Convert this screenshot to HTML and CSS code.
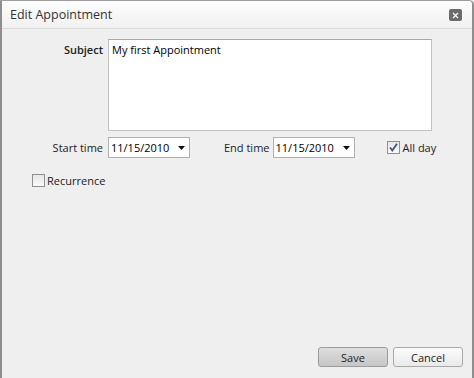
FILE: index.html
```html
<!DOCTYPE html>
<html>
<head>
<meta charset="utf-8">
<link rel="stylesheet" href="styles.css">
</head>
<body>
<div class="window">
  <div class="titlebar">
    <span class="title">Edit Appointment</span>
    <span class="close"><svg width="7" height="7" viewBox="0 0 7 7"><path d="M1 1L6 6M6 1L1 6" stroke="#fff" stroke-width="1.2" fill="none"/></svg></span>
  </div>
  <div class="content">
    <div class="form">
      <div class="row subject-row">
        <label class="label bold">Subject</label>
        <div class="textarea">My first Appointment</div>
      </div>
      <div class="row time-row">
        <label class="label">Start time</label>
        <div class="select"><span>11/15/2010</span><svg width="7" height="4" viewBox="0 0 7 4"><path d="M0 0H7L3.5 4Z" fill="#111"/></svg></div>
        <label class="end-label">End time</label>
        <div class="select"><span>11/15/2010</span><svg width="7" height="4" viewBox="0 0 7 4"><path d="M0 0H7L3.5 4Z" fill="#111"/></svg></div>
        <div class="check allday"><span class="box checked"><svg width="11" height="11" viewBox="0 0 11 11"><path d="M2 5.5L4.3 8.5L9 1.8" stroke="#3f5578" stroke-width="1.8" fill="none"/></svg></span><span>All day</span></div>
      </div>
      <div class="check recurrence"><span class="box"></span><span>Recurrence</span></div>
    </div>
    <div class="footer">
      <button class="btn save">Save</button>
      <button class="btn cancel">Cancel</button>
    </div>
  </div>
</div>
</body>
</html>
```
FILE: styles.css
```css
html, body {
  margin: 0;
  padding: 0;
  background: #efefef;
}
body {
  font-family: "Open Sans", "Noto Sans", sans-serif;
  font-size: 11px;
  color: #222;
}
.window {
  width: 474px;
  height: 378px;
  box-sizing: border-box;
  border-top: 1px solid #9e9e9e;
  border-left: 2px solid #8e8e8e;
  border-right: 2px solid #8e8e8e;
  border-top-right-radius: 5px;
  display: flex;
  flex-direction: column;
  background: #efefef;
  overflow: hidden;
}
.titlebar {
  height: 28px;
  box-sizing: border-box;
  border-bottom: 1px solid #d9d9d9;
  background: linear-gradient(#fdfdfd, #f1f1f1);
  display: flex;
  align-items: center;
  justify-content: space-between;
  padding: 0 10px 0 8px;
}
.title {
  font-size: 12.5px;
  color: #333;
}
.close {
  width: 13px;
  height: 12px;
  border-radius: 2px;
  background: #6b6b6b;
  display: flex;
  align-items: center;
  justify-content: center;
  margin-top: 1px;
}
.content {
  flex: 1;
  display: flex;
  flex-direction: column;
  justify-content: space-between;
}
.form {
  padding-top: 10px;
  display: flex;
  flex-direction: column;
}
.row {
  display: flex;
}
.label {
  width: 106px;
  text-align: right;
  padding-right: 5px;
  box-sizing: border-box;
  color: #222;
}
.bold {
  font-weight: 600;
}
.subject-row .label {
  padding-top: 3px;
}
.textarea {
  width: 324px;
  height: 92px;
  box-sizing: border-box;
  background: #fff;
  border: 1px solid #c2c2c2;
  border-top-color: #a8a8a8;
  padding: 2px 3px;
  color: #000;
}
.time-row {
  margin-top: 6px;
  align-items: center;
}
.select {
  width: 82px;
  height: 21px;
  box-sizing: border-box;
  background: #fff;
  border: 1px solid #b0b0b0;
  display: flex;
  align-items: center;
  justify-content: space-between;
  padding: 0 4px 0 2px;
  color: #000;
}
.end-label {
  margin-left: 34px;
  margin-right: 3px;
}
.check {
  display: flex;
  align-items: center;
  gap: 3px;
}
.allday {
  margin-left: 32px;
}
.box {
  width: 13px;
  height: 13px;
  box-sizing: border-box;
  border: 1px solid #8f8f8f;
  background: linear-gradient(#e6e6e6, #fafafa);
  display: flex;
  align-items: center;
  justify-content: center;
}
.recurrence {
  margin-top: 15px;
  margin-left: 30px;
  gap: 2px;
}
.footer {
  display: flex;
  justify-content: flex-end;
  gap: 5px;
  padding: 0 9px 11px 0;
}
.btn {
  width: 70px;
  height: 20px;
  border-radius: 3px;
  font-family: "Open Sans", "Noto Sans", sans-serif;
  font-size: 11px;
  color: #222;
  padding: 0;
}
.save {
  border: 1px solid #9b9b9b;
  background: linear-gradient(#dedede, #c6c6c6);
}
.cancel {
  border: 1px solid #a9a9a9;
  background: linear-gradient(#fcfcfc, #e9e9e9);
}
```
